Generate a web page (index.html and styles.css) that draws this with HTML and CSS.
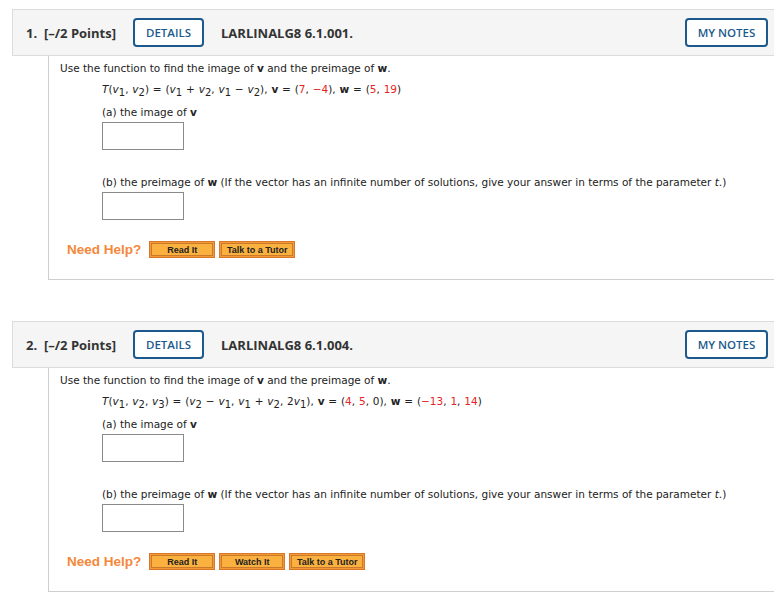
FILE: index.html
```html
<!DOCTYPE html>
<html>
<head>
<meta charset="utf-8">
<link rel="stylesheet" href="styles.css">
</head>
<body>
<div class="question q1">
  <div class="qhead">
    <span class="qnum">1.&nbsp; [–/2 Points]</span>
    <span class="btn-details">DETAILS</span>
    <span class="qid">LARLINALG8 6.1.001.</span>
    <span class="btn-notes">MY NOTES</span>
  </div>
  <div class="qbody">
    <p class="line">Use the function to find the image of <b>v</b> and the preimage of <b>w</b>.</p>
    <p class="line indent formula"><i>T</i>(<i>v</i><sub>1</sub>, <i>v</i><sub>2</sub>) = (<i>v</i><sub>1</sub> + <i>v</i><sub>2</sub>, <i>v</i><sub>1</sub> − <i>v</i><sub>2</sub>), <b>v</b> = (<span class="red">7</span>, <span class="red">−4</span>), <b>w</b> = (<span class="red">5</span>, <span class="red">19</span>)</p>
    <p class="line indent parta">(a) the image of <b>v</b></p>
    <div class="answer"></div>
    <p class="line indent partb">(b) the preimage of <b>w</b> (If the vector has an infinite number of solutions, give your answer in terms of the parameter <i>t</i>.)</p>
    <div class="answer"></div>
    <div class="help">
      <span class="need">Need Help?</span>
      <span class="hbtn w66">Read It</span>
      <span class="hbtn w76">Talk to a Tutor</span>
    </div>
  </div>
</div>

<div class="question q2">
  <div class="qhead">
    <span class="qnum">2.&nbsp; [–/2 Points]</span>
    <span class="btn-details">DETAILS</span>
    <span class="qid">LARLINALG8 6.1.004.</span>
    <span class="btn-notes">MY NOTES</span>
  </div>
  <div class="qbody">
    <p class="line">Use the function to find the image of <b>v</b> and the preimage of <b>w</b>.</p>
    <p class="line indent formula"><i>T</i>(<i>v</i><sub>1</sub>, <i>v</i><sub>2</sub>, <i>v</i><sub>3</sub>) = (<i>v</i><sub>2</sub> − <i>v</i><sub>1</sub>, <i>v</i><sub>1</sub> + <i>v</i><sub>2</sub>, 2<i>v</i><sub>1</sub>), <b>v</b> = (<span class="red">4</span>, <span class="red">5</span>, 0), <b>w</b> = (<span class="red">−13</span>, <span class="red">1</span>, <span class="red">14</span>)</p>
    <p class="line indent parta">(a) the image of <b>v</b></p>
    <div class="answer"></div>
    <p class="line indent partb">(b) the preimage of <b>w</b> (If the vector has an infinite number of solutions, give your answer in terms of the parameter <i>t</i>.)</p>
    <div class="answer"></div>
    <div class="help">
      <span class="need">Need Help?</span>
      <span class="hbtn w66">Read It</span>
      <span class="hbtn w66">Watch It</span>
      <span class="hbtn w76">Talk to a Tutor</span>
    </div>
  </div>
</div>
</body>
</html>
```

FILE: styles.css
```css
html, body {
  margin: 0;
  padding: 0;
  background: #ffffff;
  overflow: hidden;
}

body {
  font-family: "DejaVu Sans", Verdana, sans-serif;
  color: #222;
}

.question {
  margin-left: 12px;
}

.q1 {
  margin-top: 9px;
}

.q2 {
  margin-top: 41px;
}

.qhead {
  display: flex;
  align-items: center;
  height: 45px;
  background: #f5f5f5;
  border-top: 1px solid #dcdcdc;
  border-bottom: 1px solid #dcdcdc;
  border-left: 1px solid #dcdcdc;
  padding-left: 13px;
  padding-right: 6px;
  font-family: "Open Sans", "Liberation Sans", sans-serif;
  font-weight: 700;
  font-size: 13px;
  color: #333;
}

.qnum {
  white-space: pre;
}

.btn-details,
.btn-notes {
  box-sizing: border-box;
  height: 29px;
  display: flex;
  align-items: center;
  justify-content: center;
  border: 2px solid #1c5a8d;
  border-radius: 4px;
  background: #fff;
  color: #1c5a8d;
  font-size: 11.5px;
  font-weight: 600;
}

.btn-details {
  width: 71px;
  margin-left: 17px;
}

.qid {
  margin-left: 17px;
}

.btn-notes {
  width: 83px;
  margin-left: auto;
}

.qbody {
  margin-left: 36px;
  border-left: 1px solid #cfcfcf;
  border-bottom: 1px solid #cfcfcf;
  padding: 4px 0 21px 11px;
  font-size: 10.5px;
}

.line {
  margin: 0;
  line-height: 16px;
  white-space: nowrap;
}

.indent {
  margin-left: 42px;
}

.formula {
  margin-top: 5px;
  word-spacing: 0.5px;
}

.parta {
  margin-top: 7px;
}

.partb {
  margin-top: 24px;
}

sub {
  font-size: 10px;
  line-height: 0;
  vertical-align: -3px;
}

.red {
  color: #e52525;
}

.answer {
  box-sizing: border-box;
  width: 82px;
  height: 28px;
  margin: 2px 0 0 42px;
  border: 1px solid #8a8a8a;
  background: #fff;
}

.help {
  display: flex;
  align-items: center;
  margin-top: 21px;
  margin-left: 7px;
  height: 17px;
}

.need {
  font-family: "Liberation Sans", Arial, sans-serif;
  font-weight: 700;
  font-size: 13.5px;
  color: #f4873a;
  margin-right: 8px;
}

.hbtn {
  box-sizing: border-box;
  height: 17px;
  display: flex;
  align-items: center;
  justify-content: center;
  margin-right: 4px;
  background: #fbb13f;
  border: 1px solid #d9782a;
  box-shadow: inset 0 0 0 1px #f39a34, inset 0 0 0 2px #c97a2d;
  font-family: "Liberation Sans", Arial, sans-serif;
  font-weight: 700;
  font-size: 9px;
  color: #222;
}

.w66 {
  width: 66px;
}

.w76 {
  width: 76px;
}
```
